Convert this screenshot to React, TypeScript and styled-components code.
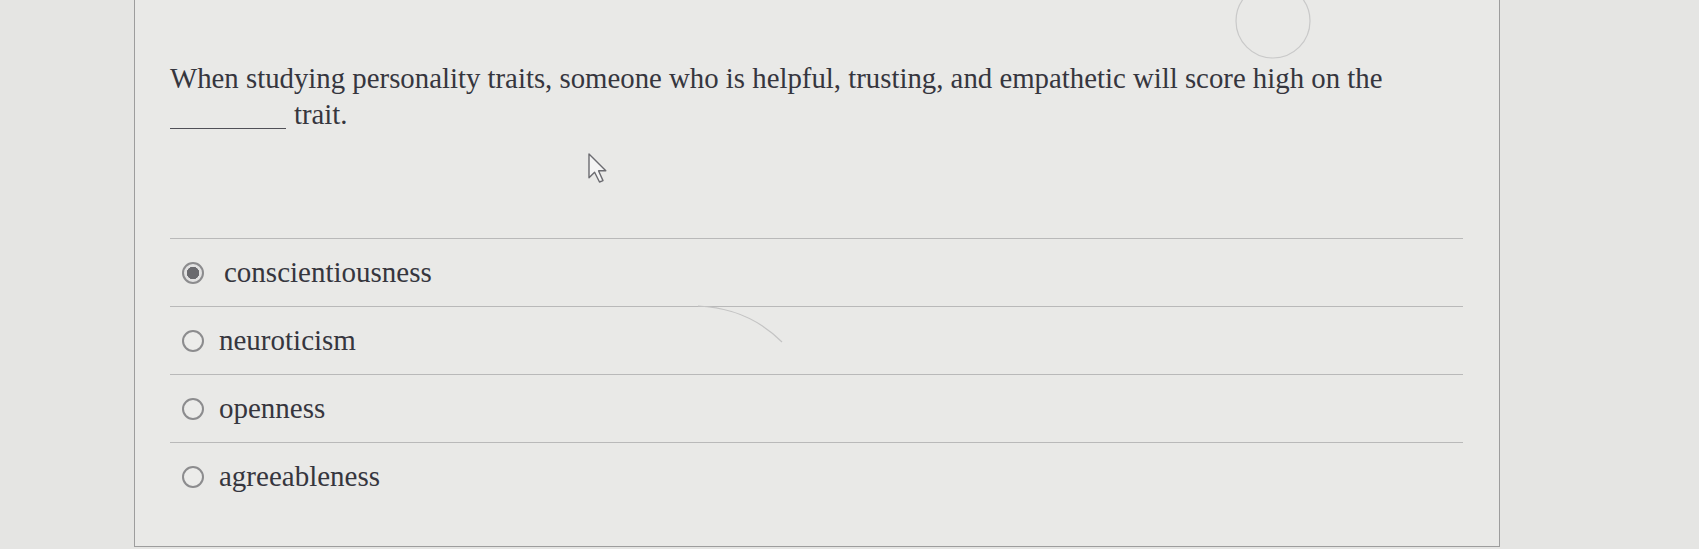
import { FC } from 'react';
import styled, { createGlobalStyle } from 'styled-components';

const GlobalStyle = createGlobalStyle`
  html, body {
    margin: 0;
    padding: 0;
    background: #e5e5e3;
    overflow: hidden;
  }
`;

const SPage = styled.div`
  display: flex;
  width: 1699px;
  height: 549px;
  position: relative;
  font-family: 'Liberation Serif', 'Times New Roman', serif;
  color: #36363e;
`;
const SGutter = styled.div`
  width: 134px;
  flex-shrink: 0;
`;
const SPanel = styled.div`
  width: 1366px;
  height: 547px;
  flex-shrink: 0;
  box-sizing: border-box;
  background: #e9e9e7;
  border-left: 1.5px solid #9d9d9d;
  border-right: 1.5px solid #9d9d9d;
  border-bottom: 1.5px solid #9d9d9d;
  padding: 60px 0 0 35px;
`;
const SQuestion = styled.p`
  margin: 0;
  width: 1290px;
  font-size: 28.8px;
  line-height: 36px;
`;
const SBlank = styled.span`
  display: inline-block;
  width: 116px;
  border-bottom: 1.2px solid #505057;
  margin-right: 8px;
  vertical-align: -5px;
`;
const SOptions = styled.div`
  margin-top: 106px;
  width: 1293px;
`;
const SOption = styled.label`
  display: flex;
  align-items: center;
  height: 68px;
  box-sizing: border-box;
  border-top: 1.5px solid #b9b9b9;
  padding-left: 12px;
  font-size: 29px;
`;
const SRadio = styled.span<{ $checked: boolean }>`
  width: 22px;
  height: 22px;
  box-sizing: border-box;
  border-radius: 50%;
  border: 2px solid #8c8c8e;
  background: ${({ $checked }) =>
    $checked ? 'radial-gradient(circle, #6a6a6e 0 6px, #e2e2e2 6.5px)' : '#ececea'};
  margin-right: ${({ $checked }) => ($checked ? '20px' : '15px')};
  flex-shrink: 0;
`;
const SGhost = styled.svg`
  position: absolute;
  left: 0;
  top: 0;
  pointer-events: none;
`;

const OPTIONS = ['conscientiousness', 'neuroticism', 'openness', 'agreeableness'];

const App: FC = () => (
  <>
    <GlobalStyle />
    <SPage>
      <SGutter />
      <SPanel>
        <SQuestion>
          When studying personality traits, someone who is helpful, trusting, and empathetic will score high on the{' '}
          <SBlank />
          trait.
        </SQuestion>
        <SOptions>
          {OPTIONS.map((opt, i) => (
            <SOption key={opt}>
              <SRadio $checked={i === 0} />
              {opt}
            </SOption>
          ))}
        </SOptions>
      </SPanel>
      {/* reflections in the photo and the mouse pointer */}
      <SGhost width="1699" height="549" viewBox="0 0 1699 549">
        <circle cx="1273" cy="21" r="37" fill="none" stroke="#c9c9c9" strokeWidth="1.2" />
        <path d="M698 306 Q748 308 782 342" fill="none" stroke="#c4c4c4" strokeWidth="1.2" />
        <g transform="translate(589 154) scale(1.4)">
          <path
            d="M0 0 L0 17 L4 13 L7.5 20 L10 19 L6.8 12 L12 12 Z"
            fill="#f4f4f4"
            stroke="#6b6b70"
            strokeWidth="1"
            strokeLinejoin="round"
          />
        </g>
      </SGhost>
    </SPage>
  </>
);

export default App;
